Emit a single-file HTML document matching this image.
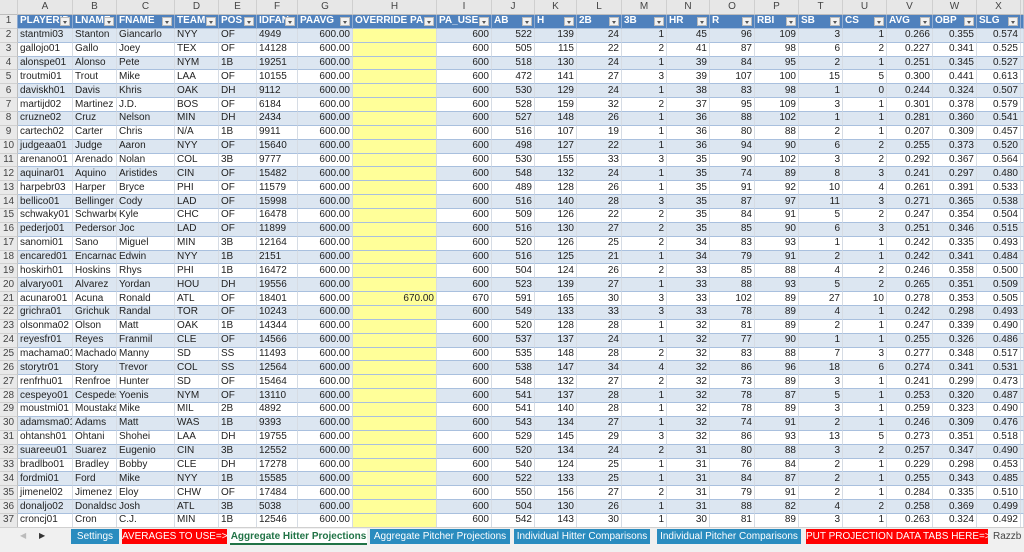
<!DOCTYPE html>
<html><head><meta charset="utf-8">
<style>
body{margin:0;width:1024px;height:551px;overflow:hidden;background:#fff;font-family:"Liberation Sans",sans-serif;font-size:10px;color:#222;position:relative}
table{position:absolute;left:0;top:0;border-collapse:separate;border-spacing:0;table-layout:fixed;width:1024px}
td{padding:0 2px;white-space:nowrap;overflow:hidden;height:13.87px;line-height:12px;border-right:1px solid #d6dce4;border-bottom:1px solid #a9c0de;text-align:right;box-sizing:border-box}
td:nth-child(-n+7){text-align:left}
td:nth-child(1){text-align:center;background:#e9e9e9;color:#444;border-right:1px solid #bdbdbd;border-bottom:1px solid #d0d0d0;padding:0}
tr.L td{background:#e7e7e7;color:#444;text-align:center;height:15px;line-height:14px;border-bottom:1px solid #bdbdbd;border-right:1px solid #cfcfcf;font-size:10px}
tr.h td{background:#4f81bd;color:#fff;font-weight:bold;text-align:left;position:relative;border-right:1px solid #8eaad0}
tr.h td:nth-child(1){background:#e9e9e9;color:#444;font-weight:normal;text-align:center}
.f{position:absolute;right:2px;top:2px;width:10px;height:9px;background:#f2f2f2;border:1px solid #bbb;box-sizing:border-box}
.f:after{content:"";position:absolute;left:2px;top:3px;border-left:2.5px solid transparent;border-right:2.5px solid transparent;border-top:3px solid #555}
tr:nth-child(odd):not(.L):not(.h) td{background:#dce6f1}
tr:not(.L):not(.h) td:nth-child(9){background:#ffff99!important}
tr:not(.L):not(.h) td:nth-child(1){background:#e9e9e9!important}
.bar{position:absolute;left:0;top:527px;width:1024px;height:24px;background:#f0f0f0;border-top:1px solid #d0d0d0}
.t{position:absolute;top:1px;height:15px;line-height:15px;font-size:10px;text-align:center;color:#fff;background:#2a8cbf;white-space:nowrap;overflow:hidden}
.r{background:#ff0000}
.a{background:#fff;color:#217346;font-weight:bold;border-bottom:2px solid #217346;height:14px}
</style></head><body>
<table>
<colgroup><col style="width:18px"><col style="width:55px"><col style="width:44px"><col style="width:58px"><col style="width:44px"><col style="width:38px"><col style="width:41px"><col style="width:55px"><col style="width:84px"><col style="width:55px"><col style="width:43px"><col style="width:42px"><col style="width:45px"><col style="width:45px"><col style="width:43px"><col style="width:45px"><col style="width:44px"><col style="width:44px"><col style="width:44px"><col style="width:46px"><col style="width:44px"><col style="width:44px"><col style="width:3px"></colgroup>
<tr class="L"><td></td><td>A</td><td>B</td><td>C</td><td>D</td><td>E</td><td>F</td><td>G</td><td>H</td><td>I</td><td>J</td><td>K</td><td>L</td><td>M</td><td>N</td><td>O</td><td>P</td><td>T</td><td>U</td><td>V</td><td>W</td><td>X</td><td></td></tr>
<tr class="h"><td>1</td><td>PLAYERID<span class="f"></span></td><td>LNAME<span class="f"></span></td><td>FNAME<span class="f"></span></td><td>TEAM<span class="f"></span></td><td>POS<span class="f"></span></td><td>IDFAN<span class="f"></span></td><td>PAAVG<span class="f"></span></td><td>OVERRIDE PA<span class="f"></span></td><td>PA_USE<span class="f"></span></td><td>AB<span class="f"></span></td><td>H<span class="f"></span></td><td>2B<span class="f"></span></td><td>3B<span class="f"></span></td><td>HR<span class="f"></span></td><td>R<span class="f"></span></td><td>RBI<span class="f"></span></td><td>SB<span class="f"></span></td><td>CS<span class="f"></span></td><td>AVG<span class="f"></span></td><td>OBP<span class="f"></span></td><td>SLG<span class="f"></span></td><td></td></tr>
<tr><td>2</td><td>stantmi03</td><td>Stanton</td><td>Giancarlo</td><td>NYY</td><td>OF</td><td>4949</td><td style="text-align:right">600.00</td><td></td><td>600</td><td>522</td><td>139</td><td>24</td><td>1</td><td>45</td><td>96</td><td>109</td><td>3</td><td>1</td><td>0.266</td><td>0.355</td><td>0.574</td><td></td></tr>
<tr><td>3</td><td>gallojo01</td><td>Gallo</td><td>Joey</td><td>TEX</td><td>OF</td><td>14128</td><td style="text-align:right">600.00</td><td></td><td>600</td><td>505</td><td>115</td><td>22</td><td>2</td><td>41</td><td>87</td><td>98</td><td>6</td><td>2</td><td>0.227</td><td>0.341</td><td>0.525</td><td></td></tr>
<tr><td>4</td><td>alonspe01</td><td>Alonso</td><td>Pete</td><td>NYM</td><td>1B</td><td>19251</td><td style="text-align:right">600.00</td><td></td><td>600</td><td>518</td><td>130</td><td>24</td><td>1</td><td>39</td><td>84</td><td>95</td><td>2</td><td>1</td><td>0.251</td><td>0.345</td><td>0.527</td><td></td></tr>
<tr><td>5</td><td>troutmi01</td><td>Trout</td><td>Mike</td><td>LAA</td><td>OF</td><td>10155</td><td style="text-align:right">600.00</td><td></td><td>600</td><td>472</td><td>141</td><td>27</td><td>3</td><td>39</td><td>107</td><td>100</td><td>15</td><td>5</td><td>0.300</td><td>0.441</td><td>0.613</td><td></td></tr>
<tr><td>6</td><td>daviskh01</td><td>Davis</td><td>Khris</td><td>OAK</td><td>DH</td><td>9112</td><td style="text-align:right">600.00</td><td></td><td>600</td><td>530</td><td>129</td><td>24</td><td>1</td><td>38</td><td>83</td><td>98</td><td>1</td><td>0</td><td>0.244</td><td>0.324</td><td>0.507</td><td></td></tr>
<tr><td>7</td><td>martijd02</td><td>Martinez</td><td>J.D.</td><td>BOS</td><td>OF</td><td>6184</td><td style="text-align:right">600.00</td><td></td><td>600</td><td>528</td><td>159</td><td>32</td><td>2</td><td>37</td><td>95</td><td>109</td><td>3</td><td>1</td><td>0.301</td><td>0.378</td><td>0.579</td><td></td></tr>
<tr><td>8</td><td>cruzne02</td><td>Cruz</td><td>Nelson</td><td>MIN</td><td>DH</td><td>2434</td><td style="text-align:right">600.00</td><td></td><td>600</td><td>527</td><td>148</td><td>26</td><td>1</td><td>36</td><td>88</td><td>102</td><td>1</td><td>1</td><td>0.281</td><td>0.360</td><td>0.541</td><td></td></tr>
<tr><td>9</td><td>cartech02</td><td>Carter</td><td>Chris</td><td>N/A</td><td>1B</td><td>9911</td><td style="text-align:right">600.00</td><td></td><td>600</td><td>516</td><td>107</td><td>19</td><td>1</td><td>36</td><td>80</td><td>88</td><td>2</td><td>1</td><td>0.207</td><td>0.309</td><td>0.457</td><td></td></tr>
<tr><td>10</td><td>judgeaa01</td><td>Judge</td><td>Aaron</td><td>NYY</td><td>OF</td><td>15640</td><td style="text-align:right">600.00</td><td></td><td>600</td><td>498</td><td>127</td><td>22</td><td>1</td><td>36</td><td>94</td><td>90</td><td>6</td><td>2</td><td>0.255</td><td>0.373</td><td>0.520</td><td></td></tr>
<tr><td>11</td><td>arenano01</td><td>Arenado</td><td>Nolan</td><td>COL</td><td>3B</td><td>9777</td><td style="text-align:right">600.00</td><td></td><td>600</td><td>530</td><td>155</td><td>33</td><td>3</td><td>35</td><td>90</td><td>102</td><td>3</td><td>2</td><td>0.292</td><td>0.367</td><td>0.564</td><td></td></tr>
<tr><td>12</td><td>aquinar01</td><td>Aquino</td><td>Aristides</td><td>CIN</td><td>OF</td><td>15482</td><td style="text-align:right">600.00</td><td></td><td>600</td><td>548</td><td>132</td><td>24</td><td>1</td><td>35</td><td>74</td><td>89</td><td>8</td><td>3</td><td>0.241</td><td>0.297</td><td>0.480</td><td></td></tr>
<tr><td>13</td><td>harpebr03</td><td>Harper</td><td>Bryce</td><td>PHI</td><td>OF</td><td>11579</td><td style="text-align:right">600.00</td><td></td><td>600</td><td>489</td><td>128</td><td>26</td><td>1</td><td>35</td><td>91</td><td>92</td><td>10</td><td>4</td><td>0.261</td><td>0.391</td><td>0.533</td><td></td></tr>
<tr><td>14</td><td>bellico01</td><td>Bellinger</td><td>Cody</td><td>LAD</td><td>OF</td><td>15998</td><td style="text-align:right">600.00</td><td></td><td>600</td><td>516</td><td>140</td><td>28</td><td>3</td><td>35</td><td>87</td><td>97</td><td>11</td><td>3</td><td>0.271</td><td>0.365</td><td>0.538</td><td></td></tr>
<tr><td>15</td><td>schwaky01</td><td>Schwarber</td><td>Kyle</td><td>CHC</td><td>OF</td><td>16478</td><td style="text-align:right">600.00</td><td></td><td>600</td><td>509</td><td>126</td><td>22</td><td>2</td><td>35</td><td>84</td><td>91</td><td>5</td><td>2</td><td>0.247</td><td>0.354</td><td>0.504</td><td></td></tr>
<tr><td>16</td><td>pederjo01</td><td>Pederson</td><td>Joc</td><td>LAD</td><td>OF</td><td>11899</td><td style="text-align:right">600.00</td><td></td><td>600</td><td>516</td><td>130</td><td>27</td><td>2</td><td>35</td><td>85</td><td>90</td><td>6</td><td>3</td><td>0.251</td><td>0.346</td><td>0.515</td><td></td></tr>
<tr><td>17</td><td>sanomi01</td><td>Sano</td><td>Miguel</td><td>MIN</td><td>3B</td><td>12164</td><td style="text-align:right">600.00</td><td></td><td>600</td><td>520</td><td>126</td><td>25</td><td>2</td><td>34</td><td>83</td><td>93</td><td>1</td><td>1</td><td>0.242</td><td>0.335</td><td>0.493</td><td></td></tr>
<tr><td>18</td><td>encared01</td><td>Encarnacion</td><td>Edwin</td><td>NYY</td><td>1B</td><td>2151</td><td style="text-align:right">600.00</td><td></td><td>600</td><td>516</td><td>125</td><td>21</td><td>1</td><td>34</td><td>79</td><td>91</td><td>2</td><td>1</td><td>0.242</td><td>0.341</td><td>0.484</td><td></td></tr>
<tr><td>19</td><td>hoskirh01</td><td>Hoskins</td><td>Rhys</td><td>PHI</td><td>1B</td><td>16472</td><td style="text-align:right">600.00</td><td></td><td>600</td><td>504</td><td>124</td><td>26</td><td>2</td><td>33</td><td>85</td><td>88</td><td>4</td><td>2</td><td>0.246</td><td>0.358</td><td>0.500</td><td></td></tr>
<tr><td>20</td><td>alvaryo01</td><td>Alvarez</td><td>Yordan</td><td>HOU</td><td>DH</td><td>19556</td><td style="text-align:right">600.00</td><td></td><td>600</td><td>523</td><td>139</td><td>27</td><td>1</td><td>33</td><td>88</td><td>93</td><td>5</td><td>2</td><td>0.265</td><td>0.351</td><td>0.509</td><td></td></tr>
<tr><td>21</td><td>acunaro01</td><td>Acuna</td><td>Ronald</td><td>ATL</td><td>OF</td><td>18401</td><td style="text-align:right">600.00</td><td>670.00</td><td>670</td><td>591</td><td>165</td><td>30</td><td>3</td><td>33</td><td>102</td><td>89</td><td>27</td><td>10</td><td>0.278</td><td>0.353</td><td>0.505</td><td></td></tr>
<tr><td>22</td><td>grichra01</td><td>Grichuk</td><td>Randal</td><td>TOR</td><td>OF</td><td>10243</td><td style="text-align:right">600.00</td><td></td><td>600</td><td>549</td><td>133</td><td>33</td><td>3</td><td>33</td><td>78</td><td>89</td><td>4</td><td>1</td><td>0.242</td><td>0.298</td><td>0.493</td><td></td></tr>
<tr><td>23</td><td>olsonma02</td><td>Olson</td><td>Matt</td><td>OAK</td><td>1B</td><td>14344</td><td style="text-align:right">600.00</td><td></td><td>600</td><td>520</td><td>128</td><td>28</td><td>1</td><td>32</td><td>81</td><td>89</td><td>2</td><td>1</td><td>0.247</td><td>0.339</td><td>0.490</td><td></td></tr>
<tr><td>24</td><td>reyesfr01</td><td>Reyes</td><td>Franmil</td><td>CLE</td><td>OF</td><td>14566</td><td style="text-align:right">600.00</td><td></td><td>600</td><td>537</td><td>137</td><td>24</td><td>1</td><td>32</td><td>77</td><td>90</td><td>1</td><td>1</td><td>0.255</td><td>0.326</td><td>0.486</td><td></td></tr>
<tr><td>25</td><td>machama01</td><td>Machado</td><td>Manny</td><td>SD</td><td>SS</td><td>11493</td><td style="text-align:right">600.00</td><td></td><td>600</td><td>535</td><td>148</td><td>28</td><td>2</td><td>32</td><td>83</td><td>88</td><td>7</td><td>3</td><td>0.277</td><td>0.348</td><td>0.517</td><td></td></tr>
<tr><td>26</td><td>storytr01</td><td>Story</td><td>Trevor</td><td>COL</td><td>SS</td><td>12564</td><td style="text-align:right">600.00</td><td></td><td>600</td><td>538</td><td>147</td><td>34</td><td>4</td><td>32</td><td>86</td><td>96</td><td>18</td><td>6</td><td>0.274</td><td>0.341</td><td>0.531</td><td></td></tr>
<tr><td>27</td><td>renfrhu01</td><td>Renfroe</td><td>Hunter</td><td>SD</td><td>OF</td><td>15464</td><td style="text-align:right">600.00</td><td></td><td>600</td><td>548</td><td>132</td><td>27</td><td>2</td><td>32</td><td>73</td><td>89</td><td>3</td><td>1</td><td>0.241</td><td>0.299</td><td>0.473</td><td></td></tr>
<tr><td>28</td><td>cespeyo01</td><td>Cespedes</td><td>Yoenis</td><td>NYM</td><td>OF</td><td>13110</td><td style="text-align:right">600.00</td><td></td><td>600</td><td>541</td><td>137</td><td>28</td><td>1</td><td>32</td><td>78</td><td>87</td><td>5</td><td>1</td><td>0.253</td><td>0.320</td><td>0.487</td><td></td></tr>
<tr><td>29</td><td>moustmi01</td><td>Moustakas</td><td>Mike</td><td>MIL</td><td>2B</td><td>4892</td><td style="text-align:right">600.00</td><td></td><td>600</td><td>541</td><td>140</td><td>28</td><td>1</td><td>32</td><td>78</td><td>89</td><td>3</td><td>1</td><td>0.259</td><td>0.323</td><td>0.490</td><td></td></tr>
<tr><td>30</td><td>adamsma01</td><td>Adams</td><td>Matt</td><td>WAS</td><td>1B</td><td>9393</td><td style="text-align:right">600.00</td><td></td><td>600</td><td>543</td><td>134</td><td>27</td><td>1</td><td>32</td><td>74</td><td>91</td><td>2</td><td>1</td><td>0.246</td><td>0.309</td><td>0.476</td><td></td></tr>
<tr><td>31</td><td>ohtansh01</td><td>Ohtani</td><td>Shohei</td><td>LAA</td><td>DH</td><td>19755</td><td style="text-align:right">600.00</td><td></td><td>600</td><td>529</td><td>145</td><td>29</td><td>3</td><td>32</td><td>86</td><td>93</td><td>13</td><td>5</td><td>0.273</td><td>0.351</td><td>0.518</td><td></td></tr>
<tr><td>32</td><td>suareeu01</td><td>Suarez</td><td>Eugenio</td><td>CIN</td><td>3B</td><td>12552</td><td style="text-align:right">600.00</td><td></td><td>600</td><td>520</td><td>134</td><td>24</td><td>2</td><td>31</td><td>80</td><td>88</td><td>3</td><td>2</td><td>0.257</td><td>0.347</td><td>0.490</td><td></td></tr>
<tr><td>33</td><td>bradlbo01</td><td>Bradley</td><td>Bobby</td><td>CLE</td><td>DH</td><td>17278</td><td style="text-align:right">600.00</td><td></td><td>600</td><td>540</td><td>124</td><td>25</td><td>1</td><td>31</td><td>76</td><td>84</td><td>2</td><td>1</td><td>0.229</td><td>0.298</td><td>0.453</td><td></td></tr>
<tr><td>34</td><td>fordmi01</td><td>Ford</td><td>Mike</td><td>NYY</td><td>1B</td><td>15585</td><td style="text-align:right">600.00</td><td></td><td>600</td><td>522</td><td>133</td><td>25</td><td>1</td><td>31</td><td>84</td><td>87</td><td>2</td><td>1</td><td>0.255</td><td>0.343</td><td>0.485</td><td></td></tr>
<tr><td>35</td><td>jimenel02</td><td>Jimenez</td><td>Eloy</td><td>CHW</td><td>OF</td><td>17484</td><td style="text-align:right">600.00</td><td></td><td>600</td><td>550</td><td>156</td><td>27</td><td>2</td><td>31</td><td>79</td><td>91</td><td>2</td><td>1</td><td>0.284</td><td>0.335</td><td>0.510</td><td></td></tr>
<tr><td>36</td><td>donaljo02</td><td>Donaldson</td><td>Josh</td><td>ATL</td><td>3B</td><td>5038</td><td style="text-align:right">600.00</td><td></td><td>600</td><td>504</td><td>130</td><td>26</td><td>1</td><td>31</td><td>88</td><td>82</td><td>4</td><td>2</td><td>0.258</td><td>0.369</td><td>0.499</td><td></td></tr>
<tr><td>37</td><td>croncj01</td><td>Cron</td><td>C.J.</td><td>MIN</td><td>1B</td><td>12546</td><td style="text-align:right">600.00</td><td></td><td>600</td><td>542</td><td>143</td><td>30</td><td>1</td><td>30</td><td>81</td><td>89</td><td>3</td><td>1</td><td>0.263</td><td>0.324</td><td>0.492</td><td></td></tr>
</table>
<div class="bar">
<span style="position:absolute;left:20px;top:3px;color:#bbb;font-size:8px">&#9664;</span>
<span style="position:absolute;left:39px;top:3px;color:#333;font-size:8px">&#9654;</span>
<div class="t" style="left:71px;width:48px">Settings</div>
<div class="t r" style="left:122px;width:105px">AVERAGES TO USE=&gt;</div>
<div class="t a" style="left:230px;width:137px">Aggregate Hitter Projections</div>
<div class="t" style="left:370px;width:140px">Aggregate Pitcher Projections</div>
<div class="t" style="left:514px;width:136px">Individual Hitter Comparisons</div>
<div class="t" style="left:657px;width:144px">Individual Pitcher Comparisons</div>
<div class="t r" style="left:806px;width:182px">PUT PROJECTION DATA TABS HERE=&gt;</div>
<div class="t" style="left:993px;width:31px;background:none;color:#444;text-align:left">Razzb</div>
</div>
</body></html>
